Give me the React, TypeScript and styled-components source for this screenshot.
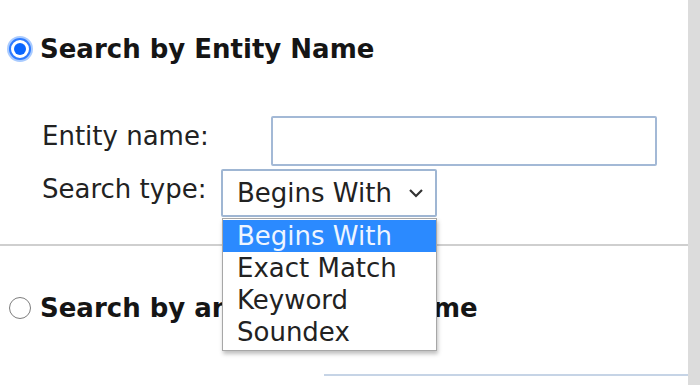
import * as React from "react";
import styled, { createGlobalStyle } from "styled-components";

const GlobalStyle = createGlobalStyle`
  html, body {
    margin: 0;
    padding: 0;
    background: #fff;
  }
  body {
    font-family: "DejaVu Sans", Verdana, sans-serif;
    color: #1a1a1a;
  }
`;

const Page = styled.div`
  display: flex;
  width: 700px;
  height: 385px;
  overflow: hidden;
  background: #fff;
`;

const Main = styled.div`
  flex: 1;
  display: flex;
  flex-direction: column;
`;

const ScrollStrip = styled.div`
  width: 12px;
  background: #dcdcdc;
`;

const Section = styled.div<{ $top: number }>`
  padding: ${p => p.$top}px 0 0 9px;
`;

const HeadingRow = styled.label`
  display: flex;
  align-items: center;
  gap: 9px;
  height: 30px;
`;

const Radio = styled.span<{ $checked?: boolean }>`
  position: relative;
  box-sizing: border-box;
  width: 22px;
  height: 22px;
  border-radius: 50%;
  flex: none;
  border: ${p => (p.$checked ? "2px solid #2f7bff" : "1.5px solid #7d7d7d")};
  box-shadow: ${p => (p.$checked ? "0 0 0 2px #a9cbff" : "none")};
  background: #fff;
  &::after {
    content: "";
    display: ${p => (p.$checked ? "block" : "none")};
    position: absolute;
    left: 3px;
    top: 3px;
    width: 12px;
    height: 12px;
    border-radius: 50%;
    background: #0a66ff;
  }
`;

const Heading = styled.span`
  font-weight: bold;
  font-size: 26px;
  line-height: 30px;
  color: #151515;
  white-space: nowrap;
`;

const FormGrid = styled.div`
  display: grid;
  grid-template-columns: 229px auto;
  row-gap: 3px;
  padding: 52px 0 0 42px;
  align-items: start;
`;

const Label = styled.span`
  font-size: 26px;
  line-height: 30px;
  padding-top: 5px;
  color: #222;
  white-space: nowrap;
`;

const TextInput = styled.div`
  box-sizing: border-box;
  width: 386px;
  height: 50px;
  border: 2px solid #a3b9d6;
  border-radius: 2px;
  background: #fff;
`;

const SelectWrap = styled.div`
  position: relative;
  margin-left: -50px;
`;

const SelectBox = styled.div`
  box-sizing: border-box;
  display: flex;
  align-items: center;
  justify-content: space-between;
  width: 216px;
  height: 48px;
  padding: 0 11px 0 14px;
  border: 2px solid #9fb6d3;
  border-radius: 2px;
  font-size: 26px;
  color: #222;
  background: #fff;
  white-space: nowrap;
`;

const Dropdown = styled.ul`
  position: absolute;
  left: 1px;
  top: 49px;
  box-sizing: border-box;
  width: 215px;
  margin: 0;
  padding: 1px 0 2px;
  list-style: none;
  background: #fff;
  border: 1px solid #a7a7a7;
  box-shadow: 1px 3px 4px rgba(0, 0, 0, 0.25);
  z-index: 2;
`;

const Option = styled.li<{ $active?: boolean }>`
  height: 32px;
  line-height: 32px;
  padding-left: 14px;
  font-size: 26px;
  white-space: nowrap;
  color: ${p => (p.$active ? "#eef5ff" : "#222")};
  background: ${p => (p.$active ? "#2b8aff" : "transparent")};
`;

const Divider = styled.div`
  height: 2px;
  background: #cfcfcf;
  margin-top: 27px;
`;

const BottomLine = styled.div`
  height: 2px;
  background: #c6d4e6;
  margin: auto 0 9px 324px;
`;

const Chevron = () => (
  <svg width="16" height="10" viewBox="0 0 16 10">
    <path d="M2 2 L8 8 L14 2" fill="none" stroke="#333" strokeWidth="2.2" />
  </svg>
);

const options = ["Begins With", "Exact Match", "Keyword", "Soundex"];

export default function App() {
  return (
    <Page>
      <GlobalStyle />
      <Main>
        <Section $top={34}>
          <HeadingRow>
            <Radio $checked />
            <Heading>Search by Entity Name</Heading>
          </HeadingRow>
        </Section>
        <FormGrid>
          <Label>Entity name:</Label>
          <TextInput />
          <Label>Search type:</Label>
          <SelectWrap>
            <SelectBox>
              <span>Begins With</span>
              <Chevron />
            </SelectBox>
            <Dropdown>
              {options.map((o, i) => (
                <Option key={o} $active={i === 0}>
                  {o}
                </Option>
              ))}
            </Dropdown>
          </SelectWrap>
        </FormGrid>
        <Divider />
        <Section $top={47}>
          <HeadingRow>
            <Radio />
            <Heading>Search by an Individual Name</Heading>
          </HeadingRow>
        </Section>
        <BottomLine />
      </Main>
      <ScrollStrip />
    </Page>
  );
}
